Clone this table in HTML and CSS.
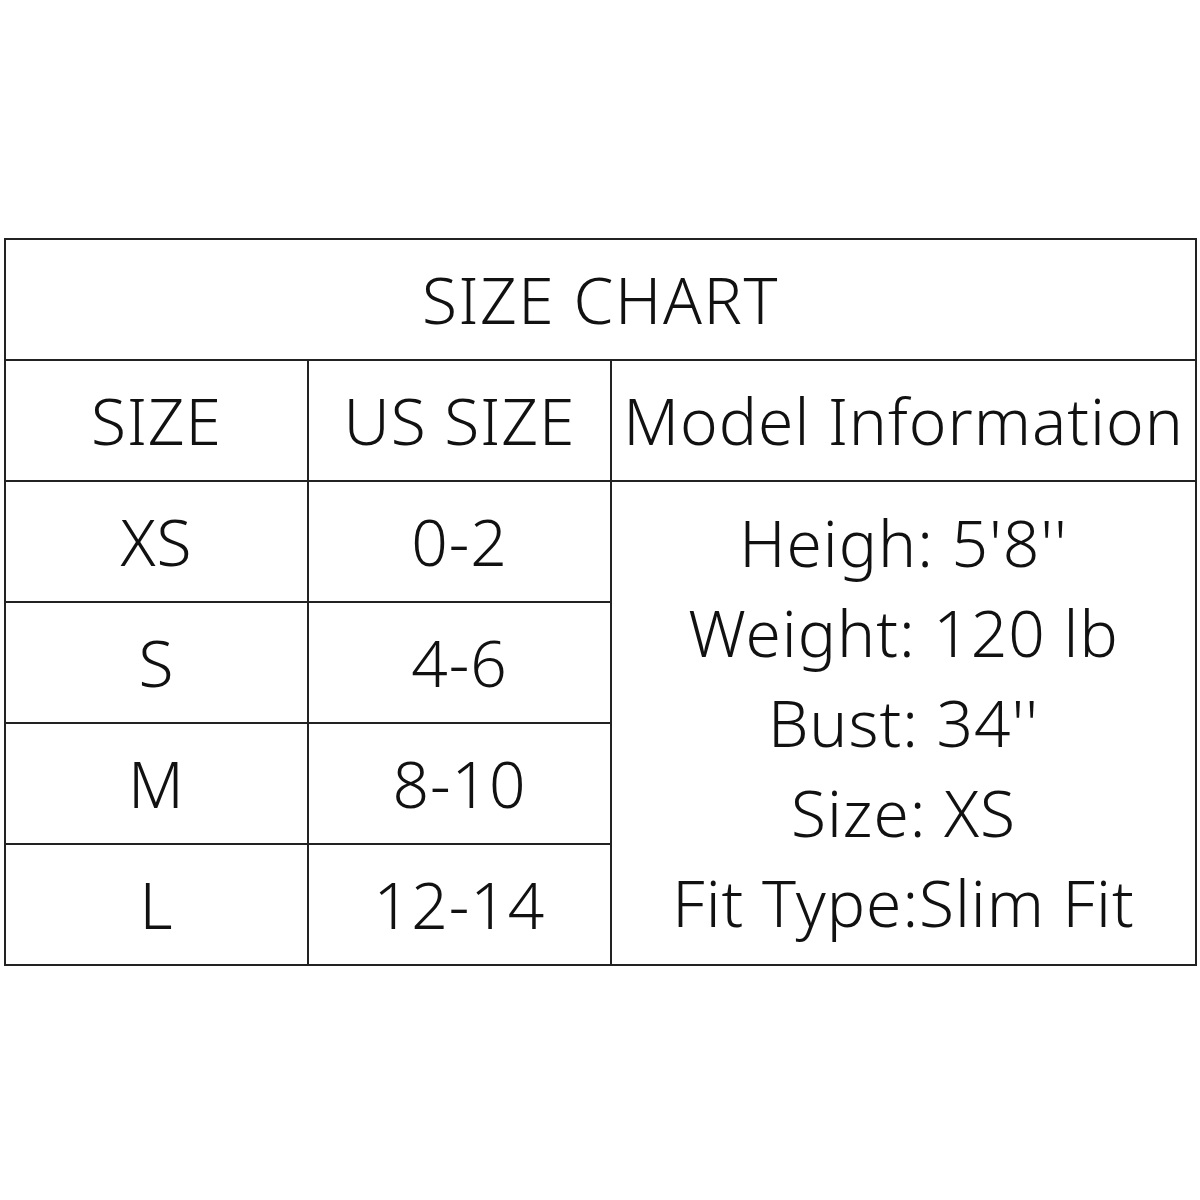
FILE: index.html
```html
<!DOCTYPE html>
<html>
<head>
<meta charset="utf-8">
<link rel="stylesheet" href="styles.css">
</head>
<body>
<div class="chart">
  <div class="cell title">SIZE CHART</div>
  <div class="cell">SIZE</div>
  <div class="cell">US SIZE</div>
  <div class="cell last">Model Information</div>
  <div class="cell">XS</div>
  <div class="cell">0-2</div>
  <div class="cell last model">
    <div class="line">Heigh: 5'8''</div>
    <div class="line">Weight: 120 lb</div>
    <div class="line">Bust: 34''</div>
    <div class="line">Size: XS</div>
    <div class="line">Fit Type:Slim Fit</div>
  </div>
  <div class="cell">S</div>
  <div class="cell">4-6</div>
  <div class="cell">M</div>
  <div class="cell">8-10</div>
  <div class="cell bottom">L</div>
  <div class="cell bottom">12-14</div>
</div>
</body>
</html>
```
FILE: styles.css
```css
html, body {
  margin: 0;
  background: #fff;
}
body {
  padding: 238px 0 0 4px;
  font-family: "Noto Sans", "Liberation Sans", sans-serif;
  color: #111;
}
.chart {
  width: 1193px;
  display: grid;
  grid-template-columns: 303px 303px 1fr;
  grid-template-rows: repeat(5, 121px) 119px;
  border: 2px solid #222;
  box-sizing: border-box;
}
.cell {
  display: flex;
  align-items: center;
  justify-content: center;
  border-right: 2px solid #222;
  border-bottom: 2px solid #222;
  font-size: 64px;
  font-weight: 300;
  letter-spacing: 1px;
  white-space: nowrap;
}
.title {
  grid-column: 1 / 4;
  border-right: none;
  letter-spacing: 1.6px;
}
.last {
  border-right: none;
}
.bottom {
  border-bottom: none;
}
.model {
  grid-column: 3;
  grid-row: 3 / 7;
  border-bottom: none;
  flex-direction: column;
  justify-content: center;
}
.model .line {
  height: 90px;
  line-height: 90px;
}
```
